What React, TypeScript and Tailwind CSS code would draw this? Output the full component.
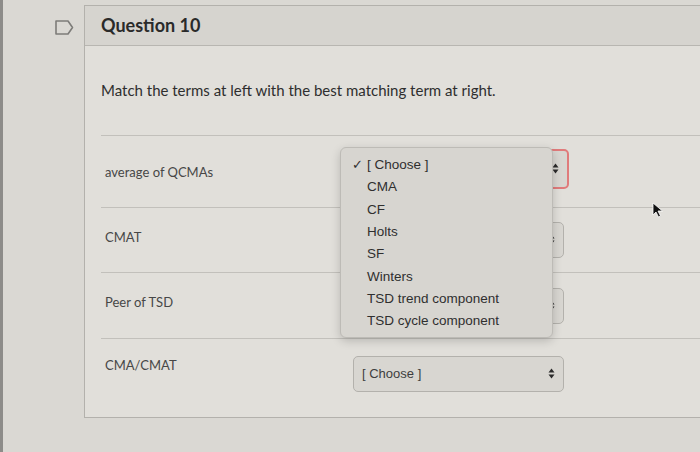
import React from 'react';

const rows = [
  { label: 'average of QCMAs', h: 'h-[72px]', pt: 'pt-[13px]', lab: 'pt-[14px]', focus: true, covered: true },
  { label: 'CMAT', h: 'h-[65px]', pt: 'pt-[14px]', lab: 'pt-[6px]', focus: false, covered: true },
  { label: 'Peer of TSD', h: 'h-[66px]', pt: 'pt-[15px]', lab: 'pt-[5px]', focus: false, covered: true },
  { label: 'CMA/CMAT', h: 'h-[72px]', pt: 'pt-[17px]', lab: 'pt-[0px]', focus: false, covered: false },
];

const options = ['[ Choose ]', 'CMA', 'CF', 'Holts', 'SF', 'Winters', 'TSD trend component', 'TSD cycle component'];

function Arrows() {
  return (
    <svg width="7" height="11" viewBox="0 0 7 11" className="shrink-0">
      <path d="M3.5 0.5 L6.5 4.5 L0.5 4.5 Z" fill="#2b2b2b" />
      <path d="M3.5 10.5 L6.5 6.5 L0.5 6.5 Z" fill="#2b2b2b" />
    </svg>
  );
}

export default function App() {
  return (
    <div className="relative w-[700px] h-[452px] overflow-hidden bg-[#dad8d3] flex font-['Lato','Liberation_Sans',sans-serif] text-[#3b3b3b]">
      {/* left edge strip */}
      <div className="w-[3px] bg-[#8d8c89] shrink-0" />

      {/* gutter with flag icon */}
      <div className="w-[81px] shrink-0 pt-[20px] pl-[52px]">
        <svg width="19" height="15" viewBox="0 0 19 15">
          <path d="M1 1 H13 L17.5 7.5 L13 14 H1 Z" fill="none" stroke="#7d7c79" strokeWidth="1.6" strokeLinejoin="round" />
        </svg>
      </div>

      {/* question card */}
      <div className="mt-[5px] h-[413px] flex-1 flex flex-col border-l border-t border-b border-[#b3b1ac] bg-[#e1dfda]">
        <div className="h-[40px] shrink-0 bg-[#d6d4cf] border-b border-[#b8b6b1] flex items-center px-4">
          <span className="text-[18px] font-bold text-[#2a2a2a]">Question 10</span>
        </div>

        <div className="pl-4 pt-[33px]">
          <p className="text-[15px] text-[#2e2e2e]">Match the terms at left with the best matching term at right.</p>

          <div className="mt-[33px] border-t border-[#c2c0bb]">
            {rows.map((r, i) => (
              <div
                key={r.label}
                className={`${r.h} ${r.pt} flex items-start ${i < rows.length - 1 ? 'border-b border-[#c2c0bb]' : ''}`}
              >
                <div className={`w-[252px] pl-1 text-[13px] text-[#474747] ${r.lab}`}>{r.label}</div>
                <div
                  className={`w-[211px] rounded-[5px] flex items-center justify-between pl-2 pr-2 bg-[#d8d6d1] ${
                    r.focus ? 'h-[40px] w-[216px] border-2 border-[#e07b7b]' : 'h-[36px] border border-[#b3b1ac]'
                  }`}
                >
                  {r.covered ? <span /> : (
                    <span className="font-['Liberation_Sans',sans-serif] text-[13px] text-[#3e3e3e]">[ Choose ]</span>
                  )}
                  <Arrows />
                </div>
              </div>
            ))}
          </div>
        </div>
      </div>

      {/* open dropdown menu */}
      <div className="absolute left-[340px] top-[147px] w-[213px] h-[191px] rounded-[6px] bg-[#d7d5d0] border border-[#bdbbb6] shadow-[0_3px_10px_rgba(0,0,0,0.18)] pt-[6px] font-['Liberation_Sans',sans-serif] text-[13.5px] text-[#2f2f2f]">
        {options.map((o, i) => (
          <div key={o} className="h-[22.3px] flex items-center">
            <span className="w-[26px] pl-[11px] text-[13px]">{i === 0 ? '✓' : ''}</span>
            <span>{o}</span>
          </div>
        ))}
      </div>

      {/* mouse cursor */}
      <svg className="absolute left-[652px] top-[202px]" width="12" height="16" viewBox="0 0 12 16">
        <path d="M1 1 L1 13 L4 10 L6.5 15 L8.5 14 L6 9 L10.5 9 Z" fill="#111" stroke="#fff" strokeWidth="0.8" />
      </svg>
    </div>
  );
}
